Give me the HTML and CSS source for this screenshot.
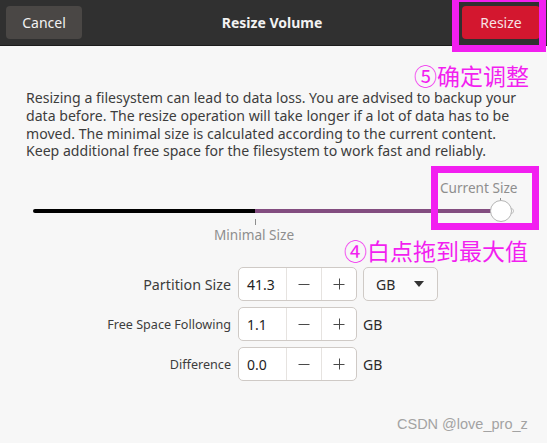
FILE: index.html
```html
<!DOCTYPE html>
<html>
<head>
<meta charset="utf-8">
<link rel="stylesheet" href="styles.css">
</head>
<body>
<div class="window">
  <header class="bar">
    <button class="btn cancel">Cancel</button>
    <div class="title">Resize Volume</div>
    <button class="btn resize">Resize</button>
  </header>
  <main class="content">
    <p class="desc">Resizing a filesystem can lead to data loss. You are advised to backup your<br>data before. The resize operation will take longer if a lot of data has to be<br>moved. The minimal size is calculated according to the current content.<br>Keep additional free space for the filesystem to work fast and reliably.</p>
    <div class="slider">
      <span class="mlabel current">Current Size</span>
      <i class="tick tick-current"></i>
      <div class="track">
        <div class="seg used"></div>
        <div class="seg free"></div>
        <div class="dot"></div>
        <div class="knob"></div>
      </div>
      <i class="tick tick-minimal"></i>
      <span class="mlabel minimal">Minimal Size</span>
    </div>
    <div class="form">
      <label class="lbl big">Partition Size</label>
      <div class="spin">
        <span class="val">41.3</span>
        <span class="op"><svg width="12" height="12" viewBox="0 0 12 12"><path d="M0.5 6.5h11" stroke="#4a4a4a" stroke-width="1"/></svg></span>
        <span class="op"><svg width="12" height="12" viewBox="0 0 12 12"><path d="M0.5 6.5h11M6.5 0.5v11" stroke="#4a4a4a" stroke-width="1"/></svg></span>
      </div>
      <div class="combo"><span>GB</span><svg width="10" height="6" viewBox="0 0 10 6"><path d="M0 0h10L5 6z" fill="#333"/></svg></div>

      <label class="lbl">Free Space Following</label>
      <div class="spin">
        <span class="val">1.1</span>
        <span class="op"><svg width="12" height="12" viewBox="0 0 12 12"><path d="M0.5 6.5h11" stroke="#4a4a4a" stroke-width="1"/></svg></span>
        <span class="op"><svg width="12" height="12" viewBox="0 0 12 12"><path d="M0.5 6.5h11M6.5 0.5v11" stroke="#4a4a4a" stroke-width="1"/></svg></span>
      </div>
      <span class="unit">GB</span>

      <label class="lbl">Difference</label>
      <div class="spin">
        <span class="val">0.0</span>
        <span class="op"><svg width="12" height="12" viewBox="0 0 12 12"><path d="M0.5 6.5h11" stroke="#4a4a4a" stroke-width="1"/></svg></span>
        <span class="op"><svg width="12" height="12" viewBox="0 0 12 12"><path d="M0.5 6.5h11M6.5 0.5v11" stroke="#4a4a4a" stroke-width="1"/></svg></span>
      </div>
      <span class="unit">GB</span>
    </div>
  </main>

  <div class="hl hl-resize"></div>
  <div class="note note5">⑤确定调整</div>
  <div class="hl hl-knob"></div>
  <div class="note note4">④白点拖到最大值</div>
  <div class="watermark">CSDN @love_pro_z</div>
</div>
</body>
</html>
```
FILE: styles.css
```css
html, body {
  margin: 0;
  padding: 0;
}
body {
  background: #f7f7f7;
  font-family: "Noto Sans", "Open Sans", sans-serif;
  color: #3d3d3d;
}
.window {
  position: relative;
  width: 547px;
  height: 443px;
  overflow: hidden;
  background: #f7f7f7;
}
.bar {
  display: flex;
  align-items: center;
  height: 45px;
  background: #303030;
  border-bottom: 1px solid #1c1c1c;
  padding: 0 7px 0 6px;
}
.btn {
  font-family: "Noto Sans", sans-serif;
  font-size: 14px;
  border: none;
  border-radius: 4px;
  color: #f2f2f2;
  height: 33px;
  padding: 0;
}
.cancel {
  width: 76px;
  background: #4a4745;
  margin-top: -1px;
}
.resize {
  width: 78px;
  background: #d3172f;
  color: #f6e3e5;
  margin-top: -1px;
}
.title {
  flex: 1;
  text-align: center;
  color: #f2f2f2;
  font-weight: bold;
  font-size: 14px;
  margin-top: -1px;
}
.content {
  padding: 0 26px;
}
.desc {
  margin: 43px 0 0;
  font-size: 14.1px;
  line-height: 17.8px;
  color: #3d3d3d;
  white-space: nowrap;
}
.slider {
  position: relative;
  height: 97px;
  width: 480px;
  margin-left: 7px;
}
.track {
  position: absolute;
  left: 0;
  top: 49px;
  width: 480px;
  height: 4px;
  display: flex;
}
.seg {
  height: 4px;
  flex-shrink: 0;
}
.seg.used {
  width: 222px;
  background: #000;
  border-radius: 2px 0 0 2px;
}
.seg.free {
  width: 246px;
  background: #834d80;
}
.knob {
  position: absolute;
  left: 457px;
  top: -9px;
  width: 20px;
  height: 20px;
  border-radius: 50%;
  background: #fff;
  border: 1px solid #b5b5b5;
}
.dot {
  position: absolute;
  left: 475px;
  top: -1px;
  width: 4px;
  height: 4px;
  border-radius: 50%;
  background: #fff;
  border: 1px solid #c0c0c0;
}
.mlabel {
  position: absolute;
  color: #8e8e8e;
  font-size: 13.6px;
  line-height: 18px;
  white-space: nowrap;
}
.mlabel.current {
  left: 407px;
  top: 19px;
}
.mlabel.minimal {
  left: 181px;
  top: 66px;
}
.tick {
  position: absolute;
  width: 1px;
  height: 6px;
  background: #8e8e8e;
}
.tick-current {
  left: 467px;
  top: 38px;
}
.tick-minimal {
  left: 222px;
  top: 59px;
}

.form {
  display: grid;
  grid-template-columns: 205px 120px auto;
  grid-auto-rows: 34px;
  column-gap: 6px;
  row-gap: 6px;
  margin-top: 10px;
  align-items: center;
}
.lbl {
  text-align: right;
  font-size: 12.6px;
  color: #3d3d3d;
}
.lbl.big {
  font-size: 14.3px;
}
.spin {
  display: flex;
  height: 34px;
  box-sizing: border-box;
  border: 1px solid #cfcac6;
  border-radius: 5px;
  background: #fff;
  margin-left: 1px;
}
.spin .val {
  width: 48px;
  padding-left: 8px;
  box-sizing: border-box;
  display: flex;
  align-items: center;
  font-size: 14px;
  color: #1e1e1e;
}
.spin .op {
  width: 35px;
  display: flex;
  align-items: center;
  justify-content: center;
  border-left: 1px solid #e6e3e0;
}
.combo {
  width: 75px;
  height: 34px;
  box-sizing: border-box;
  border: 1px solid #cfcac6;
  border-radius: 5px;
  background: #fafafa;
  display: flex;
  align-items: center;
  justify-content: space-between;
  padding: 0 13px 0 12px;
  font-size: 14px;
  color: #2a2a2a;
}
.unit {
  font-size: 14px;
  color: #2a2a2a;
}

.hl {
  position: absolute;
  border: 7px solid #f21ff0;
  box-sizing: border-box;
}
.hl-resize {
  left: 452px;
  top: -5px;
  width: 94px;
  height: 57px;
}
.hl-knob {
  left: 431px;
  top: 166px;
  width: 108px;
  height: 64px;
}
.note {
  position: absolute;
  color: #f21ff0;
  font-family: "Noto Sans CJK SC", sans-serif;
  font-size: 23px;
  line-height: 22px;
  white-space: nowrap;
}
.note5 {
  left: 414px;
  top: 64px;
}
.note4 {
  left: 344px;
  top: 239px;
}
.watermark {
  position: absolute;
  left: 397px;
  top: 416px;
  font-family: "Liberation Sans", Arial, sans-serif;
  font-size: 14.5px;
  color: #a3a3a3;
}
```
